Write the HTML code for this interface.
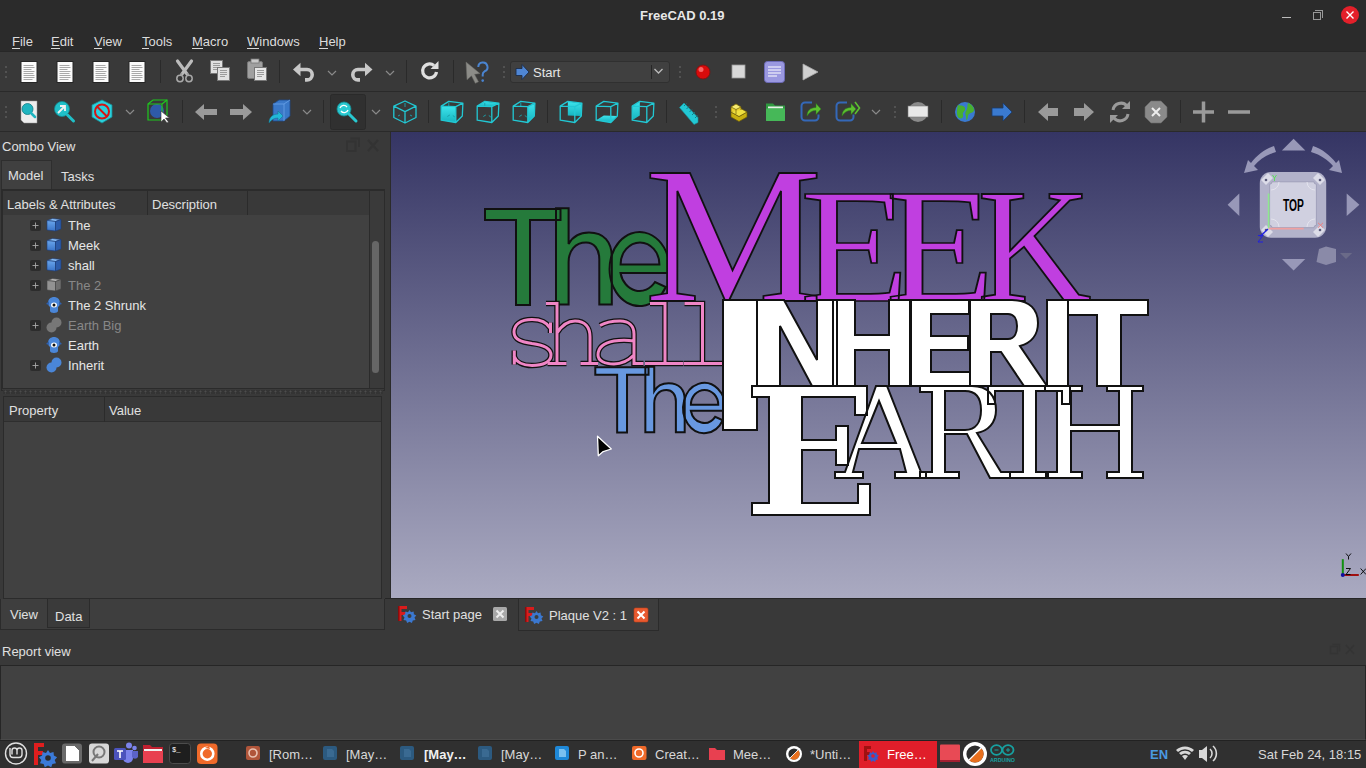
<!DOCTYPE html>
<html><head><meta charset="utf-8">
<style>
*{margin:0;padding:0;box-sizing:border-box}
html,body{width:1366px;height:768px;overflow:hidden;background:#393939;font-family:"Liberation Sans",sans-serif;font-size:13px;color:#dcdcdc}
.a{position:absolute}
.t{position:absolute;white-space:nowrap;line-height:1}
#title{left:0;top:0;width:1366px;height:52px;background:#2b2b2b}
#tb1{left:0;top:52px;width:1366px;height:40px;background:#393939;border-bottom:1px solid #2a2a2a}
#tb2{left:0;top:92px;width:1366px;height:40px;background:#393939;border-bottom:1px solid #2a2a2a}
.menu u{text-decoration:none;background:linear-gradient(#d8d8d8,#d8d8d8) no-repeat 0 13.8px/100% 1px}
#view3d{left:391px;top:132px;width:975px;height:466px;background:linear-gradient(#353564,#aaaac1)}
#taskbar{left:0;top:740px;width:1366px;height:28px;background:#303030}
.sep{position:absolute;width:1px;height:22px;background:#2a2a2a}
.hdl{position:absolute;width:2px;height:2px;background:#525252}
</style></head><body>
<div id="title" class="a"><div class="a" style="left:0;top:51px;width:1366px;height:1px;background:#272727"></div>
  <div class="t" style="left:640px;top:9px;font-weight:bold;color:#e8e8e8">FreeCAD 0.19</div>
  <div class="a" style="left:1282px;top:17px;width:9px;height:1px;background:#bbb"></div>
  <div class="a" style="left:1313px;top:12px;width:8px;height:8px;border:1px solid #999"></div>
  <div class="a" style="left:1315px;top:10px;width:8px;height:8px;border-top:1px solid #999;border-right:1px solid #999"></div>
  <div class="a" style="left:1341px;top:6px;width:18px;height:18px;border-radius:50%;background:#e3202a"></div>
  <svg class="a" style="left:1341px;top:6px" width="18" height="18"><path d="M5.5 5.5L12.5 12.5M12.5 5.5L5.5 12.5" stroke="#fff" stroke-width="1.4"/></svg>

  <div class="t menu" style="left:12px;top:35px"><u>F</u>ile</div>
  <div class="t menu" style="left:51px;top:35px"><u>E</u>dit</div>
  <div class="t menu" style="left:94px;top:35px"><u>V</u>iew</div>
  <div class="t menu" style="left:142px;top:35px"><u>T</u>ools</div>
  <div class="t menu" style="left:192px;top:35px"><u>M</u>acro</div>
  <div class="t menu" style="left:247px;top:35px"><u>W</u>indows</div>
  <div class="t menu" style="left:319px;top:35px"><u>H</u>elp</div>
</div>
<div id="tb1" class="a">
 <div class="hdl" style="left:5px;top:14px"></div><div class="hdl" style="left:5px;top:19px"></div><div class="hdl" style="left:5px;top:24px"></div>
 <svg class="a" style="left:0;top:0" width="1366" height="40">
  <defs>
   <g id="doc"><rect x="0.5" y="0.5" width="16" height="21" fill="#fbfbfb" stroke="#262626"/>
    <path d="M3 4.5h10M3 6.5h11M3 8.5h8M3 10.5h11M3 12.5h10M3 14.5h11M3 16.5h11M3 18.5h9" stroke="#a8a8a8" stroke-width="1"/></g>
   <path id="dd" d="M0 0l4 4l4-4" fill="none" stroke="#8a8a8a" stroke-width="1.2"/>
  </defs>
  <use href="#doc" x="20.5" y="9"/>
  <use href="#doc" x="56.5" y="9"/>
  <use href="#doc" x="92.5" y="9"/>
  <use href="#doc" x="128.5" y="9"/>
  <rect x="160" y="8" width="1" height="23" fill="#2a2a2a"/>
  <!-- scissors -->
  <path d="M177.5 9l9.5 13M191.5 9l-9.5 13" stroke="#bcbcbc" stroke-width="3.2" stroke-linecap="round"/>
  <path d="M182 21l-1.5 2M187 21l1.5 2" stroke="#a0a0a0" stroke-width="1.5"/>
  <circle cx="180" cy="26.5" r="3.2" fill="none" stroke="#a8a8a8" stroke-width="1.5"/><circle cx="189" cy="26.5" r="3.2" fill="none" stroke="#a8a8a8" stroke-width="1.5"/>
  <!-- copy -->
  <rect x="210.5" y="8.5" width="12" height="13" fill="#e0e0e0" stroke="#777"/>
  <path d="M213 11.5h7M213 13.5h7M213 15.5h7M213 17.5h5" stroke="#888" stroke-width="0.8"/>
  <rect x="217.5" y="15.5" width="12" height="13" fill="#e0e0e0" stroke="#777"/>
  <path d="M220 18.5h7M220 20.5h7M220 22.5h7M220 24.5h5" stroke="#888" stroke-width="0.8"/>
  <!-- paste -->
  <rect x="247.5" y="9.5" width="15" height="17" rx="1.5" fill="#a0a0a0" stroke="#777"/>
  <rect x="251" y="7" width="8" height="4" fill="#c8c8c8" stroke="#777" stroke-width="0.8"/>
  <rect x="254.5" y="15.5" width="12" height="13" fill="#e6e6e6" stroke="#777"/>
  <path d="M257 18.5h7M257 20.5h7M257 22.5h7M257 24.5h5" stroke="#888" stroke-width="0.8"/>
  <rect x="279" y="8" width="1" height="23" fill="#2a2a2a"/>
  <!-- undo -->
  <path d="M299 17.5h8a5.2 5.2 0 0 1 0 10.4h-2" fill="none" stroke="#c8c8c8" stroke-width="3.6"/>
  <path d="M293 17.5l7.5-6.8v13.6z" fill="#c8c8c8"/>
  <use href="#dd" x="328" y="19"/>
  <!-- redo -->
  <path d="M366 17.5h-8a5.2 5.2 0 0 0 0 10.4h2" fill="none" stroke="#c8c8c8" stroke-width="3.6"/>
  <path d="M372.5 17.5l-7.5-6.8v13.6z" fill="#c8c8c8"/>
  <use href="#dd" x="386" y="19"/>
  <rect x="406" y="8" width="1" height="23" fill="#2a2a2a"/>
  <!-- refresh -->
  <path d="M436.5 20a7 7 0 1 1-2.5-6.5" fill="none" stroke="#e0e0e0" stroke-width="3.2"/>
  <path d="M438.5 9v8h-8z" fill="#e0e0e0"/>
  <rect x="453" y="8" width="1" height="23" fill="#2a2a2a"/>
  <!-- whats this -->
  <path d="M466 10L480 21.5L474.5 22.3L478.5 29.8L475.3 31.3L471.5 23.8L467 27.8Z" fill="#8c8c88" stroke="#6c6c68" stroke-width="0.5"/>
  <path d="M478.3 15a4.6 4.6 0 1 1 6.3 4.3c-1.5 0.8-1.9 1.6-1.9 3.2v2" fill="none" stroke="#4a84d0" stroke-width="2"/>
  <circle cx="482.7" cy="28.6" r="1.3" fill="#4a84d0"/>
  <rect x="503" y="14" width="2" height="2" fill="#525252"/><rect x="503" y="19" width="2" height="2" fill="#525252"/><rect x="503" y="24" width="2" height="2" fill="#525252"/>
  <!-- combo -->
  <rect x="510.5" y="9.5" width="159" height="21" rx="2.5" fill="#404040" stroke="#303030"/>
  <rect x="651" y="13" width="1" height="14" fill="#262626"/>
  <path d="M654.5 17l4 4l4-4" fill="none" stroke="#bbb" stroke-width="1.3"/>
  <path d="M516 16.5h6v-4l7 7.5l-7 7.5v-4h-6z" fill="#4f86d4" stroke="#1c2c4a" stroke-width="0.9"/>
  <rect x="679" y="14" width="2" height="2" fill="#525252"/><rect x="679" y="19" width="2" height="2" fill="#525252"/><rect x="679" y="24" width="2" height="2" fill="#525252"/>
  <!-- record -->
  <circle cx="703" cy="20" r="7" fill="#d80b0b" stroke="#7a1010" stroke-width="0.8"/>
  <circle cx="701" cy="17.5" r="2.5" fill="#ff7a7a" opacity="0.8"/>
  <!-- stop -->
  <rect x="732" y="13" width="13" height="13" fill="#d8d8d8" stroke="#999" stroke-width="0.8"/>
  <!-- macro -->
  <rect x="764.5" y="9.5" width="20" height="21" rx="3" fill="#9a98e0" stroke="#6d6bb8"/>
  <path d="M768 15h13M768 18h13M768 21h13M768 24h9" stroke="#fff" stroke-width="1.2"/>
  <!-- play -->
  <path d="M803 12l15 8l-15 8z" fill="#d0d0d0" stroke="#a8a8a8" stroke-width="0.8"/>
 </svg>
 <span class="t" style="left:533px;top:14px;color:#e6e6e6">Start</span>
</div>
<div id="tb2" class="a">
 <div class="hdl" style="left:5px;top:14px"></div><div class="hdl" style="left:5px;top:19px"></div><div class="hdl" style="left:5px;top:24px"></div>
 <svg class="a" style="left:0;top:0" width="1366" height="40">
  <defs>
   <path id="dd2" d="M0 0l4 4l4-4" fill="none" stroke="#8a8a8a" stroke-width="1.2"/>
   <g id="cubeo"><path d="M1 6l5-5h15v15l-5 5h-15z" fill="none" stroke="#2ad3de" stroke-width="1.5"/><path d="M1 6h15v15M16 6l5-5" fill="none" stroke="#2ad3de" stroke-width="1.5"/></g>
  </defs>
  <!-- doc search -->
  <path d="M21 9h16v22h-13l-3-3z" fill="#ededed" stroke="#999" stroke-width="0.5"/>
  <circle cx="27.5" cy="17" r="5.5" fill="#1fb5c0" stroke="#127c85" stroke-width="0.8"/>
  <path d="M31 21l4 4" stroke="#1fb5c0" stroke-width="2.5" stroke-linecap="round"/>
  <!-- zoom arrow -->
  <circle cx="62" cy="17" r="7.5" fill="#20c0c8" stroke="#138a92" stroke-width="0.8"/>
  <path d="M67.5 23l6 6" stroke="#20c0c8" stroke-width="3" stroke-linecap="round"/>
  <path d="M58 21l7-7M60 14h5v5" fill="none" stroke="#f0f0f0" stroke-width="1.8"/>
  <!-- hexagon stop -->
  <path d="M102 8l10 5v12l-10 6l-10-6v-12z" fill="#2ad0dc" stroke="#178a92" stroke-width="0.8"/>
  <circle cx="102" cy="19.5" r="7" fill="none" stroke="#d41414" stroke-width="2"/>
  <path d="M97 14.5l10 10" stroke="#d41414" stroke-width="2"/>
  <use href="#dd2" x="126" y="18"/>
  <!-- cube select -->
  <path d="M148 12l5-4h14v15l-5 5h-14z" fill="none" stroke="#1ec81e" stroke-width="1.2"/>
  <circle cx="157" cy="19" r="7" fill="#2e5aa8"/>
  <path d="M148 12h14v16M162 12l5-4" fill="none" stroke="#1ec81e" stroke-width="1.2"/>
  <path d="M161 19l0 11l3-3l3 4l1.5-1l-3-4h4z" fill="#fff" stroke="#333" stroke-width="0.6"/>
  <rect x="182" y="8" width="1" height="23" fill="#2a2a2a"/>
  <!-- gray arrows -->
  <path d="M195 20l9-8v5h13v6h-13v5z" fill="#9a9a9a"/>
  <path d="M252 20l-9-8v5h-13v6h13v5z" fill="#9a9a9a"/>
  <!-- blue cube arrow -->
  <path d="M273 12l6-4h11v16l-6 5h-11z" fill="#3a78c8" stroke="#1e4a8a" stroke-width="0.8"/>
  <path d="M273 12h11v17M284 12l6-4" fill="none" stroke="#6aa2e8" stroke-width="0.8"/>
  <path d="M269 31c0-6 4-9 9-9v-3l5 5l-5 5v-3c-4 0-7 2-9 5z" fill="#22b8d8" stroke="#12708a" stroke-width="0.5"/>
  <use href="#dd2" x="303" y="18"/>
  <rect x="323" y="8" width="1" height="23" fill="#2a2a2a"/>
  <!-- pressed box -->
  <rect x="330.5" y="2.5" width="35" height="35" rx="2" fill="#303030" stroke="#2a2a2a"/>
  <circle cx="344" cy="17" r="7" fill="#28c8d0" stroke="#168a92" stroke-width="0.8"/>
  <path d="M349 22l7 7" stroke="#28c8d0" stroke-width="3" stroke-linecap="round"/>
  <path d="M340 16a4 4 0 0 1 7-1M348 18a4 4 0 0 1-7 1" fill="none" stroke="#fff" stroke-width="1.3"/>
  <use href="#dd2" x="372" y="18"/>
  <!-- iso cube -->
  <defs><path id="cbo" d="M0.2 5.1L7.8 0.4L21.9 2.2L14.8 5.7ZM0.2 5.1L0.2 19.2L14.8 21.5L14.8 5.7M21.9 2.2L21.3 15.0L14.8 21.5" fill="none" stroke="#22c8d4" stroke-width="1.3" stroke-linejoin="round"/><path id="cbh" d="M7.8 1.9V5.4M8.8 14.0l-2.5 1.5M11.8 14.5l2 1.5" fill="none" stroke="#1aa0aa" stroke-width="1"/><linearGradient id="cyg" x1="0" y1="0" x2="0" y2="1"><stop offset="0" stop-color="#3ee4ec"/><stop offset="1" stop-color="#16b4c0"/></linearGradient></defs>
  <path d="M405 9L416 14.2V25.5L405 31L393.8 25.5V14.2Z M393.8 14.2L405 19.6L416 14.2M405 19.6V31" fill="none" stroke="#22c8d4" stroke-width="1.3" stroke-linejoin="round"/>
  <path d="M405 11v4M398 24l2-1M410 23l2 1" stroke="#1aa0aa" stroke-width="1"/>
  <rect x="428" y="8" width="1" height="23" fill="#2a2a2a"/>
  <g transform="translate(441 9)"><path d="M0.2 5.1L14.8 5.7L14.8 21.5L0.2 19.2Z" fill="url(#cyg)"/><use href="#cbh"/><use href="#cbo"/></g>
  <g transform="translate(477 9)"><path d="M0.2 5.1L7.8 0.4L21.9 2.2L14.8 5.7Z" fill="url(#cyg)"/><use href="#cbh"/><use href="#cbo"/></g>
  <g transform="translate(513 9)"><path d="M14.8 5.7L21.9 2.2L21.3 15.0L14.8 21.5Z" fill="url(#cyg)"/><use href="#cbh"/><use href="#cbo"/></g>
  <rect x="547" y="8" width="1" height="23" fill="#2a2a2a"/>
  <g transform="translate(560 9)"><path d="M7.8 0.4L21.9 2.2L21.3 15.0L7.8 14.5Z" fill="url(#cyg)"/><use href="#cbo"/></g>
  <g transform="translate(596 9)"><path d="M0.2 19.2L14.8 21.5L21.3 15.0L7.8 14.5Z" fill="url(#cyg)"/><use href="#cbo"/></g>
  <g transform="translate(632 9)"><path d="M0.2 5.1L7.8 0.4L7.8 14.5L0.2 19.2Z" fill="url(#cyg)"/><use href="#cbo"/></g>
  <rect x="666" y="8" width="1" height="23" fill="#2a2a2a"/>
  <!-- ruler -->
  <path d="M679.5 15.5l4.5-4.5l14 14.5v5l-4 2z" fill="#22c8d4" stroke="#17949c" stroke-width="0.6"/>
  <path d="M684 14l2.5-2.5M686.5 17l3-3M689.5 20l2.5-2.5M692 23l3-3M695 26l2.5-2.5" stroke="#127880" stroke-width="0.9"/>
  <rect x="715" y="14" width="2" height="2" fill="#525252"/><rect x="715" y="19" width="2" height="2" fill="#525252"/><rect x="715" y="24" width="2" height="2" fill="#525252"/>
  <!-- yellow part -->
  <g stroke="#6a5a08" stroke-width="0.7" stroke-linejoin="round">
   <path d="M731 25l8 4.5l8-4.5v-5l-8 4.5l-8-4.5z" fill="#c8b010"/>
   <path d="M731 20l8 4.5l8-4.5l-8-4.5z" fill="#f0e040"/>
   <path d="M731 20v-5l5-3l5 3v3" fill="#e8d030"/>
   <path d="M731 15l5 2.5l5-2.5l-5-3z" fill="#f8ec70"/>
   <path d="M736 17.5v4.5" fill="none"/>
  </g>
  <!-- green folder -->
  <path d="M766 11.5h7l2 2h10v15.5h-19z" fill="#2f9a40"/>
  <rect x="768" y="14.5" width="15" height="2" fill="#e8f0e8"/>
  <rect x="766" y="16.5" width="19" height="12.5" rx="0.8" fill="#46b858"/>
  <!-- share -->
  <path d="M812 10.5H805a3.5 3.5 0 0 0-3.5 3.5V25a3.5 3.5 0 0 0 3.5 3.5H815a3.5 3.5 0 0 0 3.5-3.5V22.5" fill="none" stroke="#3468b8" stroke-width="2"/>
  <path d="M807 24c0-5 3-8.5 9-8.5v-4l5 5.5l-5 5.5v-4c-4 0-7 2-9 5.5z" fill="#5cc030" stroke="#2a7a1a" stroke-width="0.5"/>
  <path d="M847 10.5H840a3.5 3.5 0 0 0-3.5 3.5V25a3.5 3.5 0 0 0 3.5 3.5H850a3.5 3.5 0 0 0 3.5-3.5V22.5" fill="none" stroke="#3468b8" stroke-width="2"/>
  <path d="M842 24c0-5 3-8.5 9-8.5v-4l5 5.5l-5 5.5v-4c-4 0-7 2-9 5.5z" fill="#5cc030" stroke="#2a7a1a" stroke-width="0.5"/>
  <path d="M855 10l4.5 6l-4.5 6" fill="none" stroke="#5cc030" stroke-width="1.6"/>
  <use href="#dd2" x="872" y="18"/>
  <rect x="894" y="14" width="2" height="2" fill="#525252"/><rect x="894" y="19" width="2" height="2" fill="#525252"/><rect x="894" y="24" width="2" height="2" fill="#525252"/>
  <!-- gray window -->
  <circle cx="918" cy="20" r="10" fill="#8a8a8a"/>
  <rect x="908" y="14" width="20" height="11" fill="#e8e8e8" stroke="#777" stroke-width="0.6"/>
  <rect x="941" y="8" width="1" height="23" fill="#2a2a2a"/>
  <!-- globe -->
  <circle cx="965" cy="20" r="10" fill="#3a7ad0"/>
  <path d="M958 13c3 1 6 0 7 3s-3 4-2 7s-2 4-4 3s-3-6-1-13zM968 11c3 1 6 4 6 7s-3 2-5 4s0 5-3 6c1-4-2-6 0-9s1-5 2-8z" fill="#48b030"/>
  <!-- blue arrow -->
  <path d="M992 16h11v-5l9 9l-9 9v-5h-11z" fill="#3a7ad0" stroke="#1a3a6a" stroke-width="0.8"/>
  <rect x="1024" y="8" width="1" height="23" fill="#2a2a2a"/>
  <path d="M1038 20l10-9v5h10v8h-10v5z" fill="#9a9a9a"/>
  <path d="M1094 20l-10-9v5h-10v8h10v5z" fill="#9a9a9a"/>
  <!-- refresh gray -->
  <path d="M1113 18a8 8 0 0 1 14-4M1128 22a8 8 0 0 1-14 4" fill="none" stroke="#9a9a9a" stroke-width="3"/>
  <path d="M1130 9v8h-8zM1110 31v-8h8z" fill="#9a9a9a"/>
  <!-- stop octagon -->
  <path d="M1151 9h10l6 6v10l-6 6h-10l-6-6v-10z" fill="#8a8a8a" stroke="#6a6a6a" stroke-width="0.6"/>
  <path d="M1152 16l8 8M1160 16l-8 8" stroke="#eee" stroke-width="2"/>
  <rect x="1180" y="8" width="1" height="23" fill="#2a2a2a"/>
  <path d="M1193 20h21M1203.5 9.5v21" stroke="#9a9a9a" stroke-width="3.5"/>
  <path d="M1228 20h22" stroke="#9a9a9a" stroke-width="3.5"/>
 </svg>
</div>
<div id="combo" class="a" style="left:0;top:132px;width:391px;height:508px;background:#393939">
 <div class="t" style="left:2px;top:8px;color:#e0e0e0">Combo View</div>
 <svg class="a" style="left:340px;top:1px" width="45" height="22"><path d="M7 8.5h8.5v9.5h-8.5zM10.5 5.5h8.5v8.5" fill="none" stroke="#333" stroke-width="2"/><path d="M28 7l10 11M38 7l-10 11" stroke="#333" stroke-width="2.2"/></svg>
 <!-- tabs -->
 <div class="a" style="left:1px;top:28px;width:51px;height:30px;background:#404040;border:1px solid #2e2e2e;border-bottom:none"></div>
 <div class="t" style="left:8px;top:37px;color:#e0e0e0">Model</div>
 <div class="t" style="left:61px;top:38px;color:#e0e0e0">Tasks</div>
 <!-- pane -->
 <div class="a" style="left:1px;top:57px;width:384px;height:202px;border:1px solid #2b2b2b;background:#3a3a3a"></div>
 <!-- tree -->
 <div class="a" style="left:2px;top:58px;width:382px;height:199px;border:1px solid #2b2b2b;background:#414141"></div>
 <div class="a" style="left:3px;top:59px;width:366px;height:24px;background:#393939"></div>
 <div class="a" style="left:147px;top:59px;width:1px;height:24px;background:#2b2b2b"></div>
 <div class="a" style="left:247px;top:59px;width:1px;height:24px;background:#2b2b2b"></div>
 <div class="t" style="left:7px;top:66px;color:#e0e0e0">Labels &amp; Attributes</div>
 <div class="t" style="left:152px;top:66px;color:#e0e0e0">Description</div>
 <div class="a" style="left:369px;top:59px;width:15px;height:197px;background:#3a3a3a;border-left:1px solid #2b2b2b"></div>
 <div class="a" style="left:372px;top:109px;width:7px;height:132px;border-radius:4px;background:#666"></div>
 <!-- splitter -->
 <div class="a" style="left:3px;top:258px;width:380px;height:4px;background:radial-gradient(circle,#4c4c4c 0.9px,transparent 1.1px) 0 0/5px 3px,#343434"></div>
 <!-- property -->
 <div class="a" style="left:3px;top:264px;width:379px;height:203px;border:1px solid #2b2b2b;background:#414141"></div>
 <div class="a" style="left:4px;top:265px;width:377px;height:25px;background:#393939;border-bottom:1px solid #2e2e2e"></div>
 <div class="a" style="left:104px;top:265px;width:1px;height:25px;background:#2b2b2b"></div>
 <div class="t" style="left:9px;top:272px;color:#e0e0e0">Property</div>
 <div class="t" style="left:109px;top:272px;color:#e0e0e0">Value</div>
 <!-- bottom tabs -->
 <div class="a" style="left:0;top:467px;width:385px;height:31px;background:#3e3e3e;border-right:1px solid #2b2b2b;border-bottom:1px solid #2b2b2b;border-left:1px solid #2b2b2b"></div>
 <div class="a" style="left:47px;top:467px;width:43px;height:29px;background:#3a3a3a;border:1px solid #2b2b2b;border-top:none"></div>
 <div class="t" style="left:10px;top:476px;color:#e0e0e0">View</div>
 <div class="t" style="left:55px;top:478px;color:#e0e0e0">Data</div>
 <div class="a" style="left:390px;top:0;width:1px;height:466px;background:#2b2b2b"></div>
</div>
<svg class="a" style="left:0;top:212px" width="370" height="165">
 <defs>
  <g id="pl"><rect x="0" y="0" width="11" height="11" rx="2" fill="#2c2c2c"/><path d="M2.5 5.5h6M5.5 2.5v6" stroke="#a8a8a8" stroke-width="0.9"/></g>
  <linearGradient id="cbg" x1="0" y1="0" x2="0" y2="1"><stop offset="0" stop-color="#6aa6ec"/><stop offset="1" stop-color="#3a74c8"/></linearGradient>
  <g id="cb" stroke="#1c3c78" stroke-width="0.6" stroke-linejoin="round"><path d="M1 3.5L6.5 1.5L15 2.5L9.5 4.5Z" fill="#86baf2"/><path d="M1 3.5L9.5 4.5V14L1 13Z" fill="url(#cbg)"/><path d="M9.5 4.5L15 2.5V12L9.5 14Z" fill="#2c5caa"/></g>
  <g id="cg" stroke="#444" stroke-width="0.6" stroke-linejoin="round"><path d="M1 3.5L6.5 1.5L15 2.5L9.5 4.5Z" fill="#b4b4b4"/><path d="M1 3.5L9.5 4.5V14L1 13Z" fill="#929292"/><path d="M9.5 4.5L15 2.5V12L9.5 14Z" fill="#6e6e6e"/></g>
  <g id="sh"><path d="M2 6c0-4 3-6 6-6s6 2 6 6c0 2-1 3-2 4v4c0 1-2 2-4 2s-4-1-4-2v-4c-1-1-2-2-2-4z" fill="#4a86d8"/><path d="M0 7l3-3v4zM16 7l-3-3v4z" fill="#2f62b0"/><ellipse cx="8" cy="8" rx="3" ry="2.5" fill="#fff"/><circle cx="8" cy="8" r="1.5" fill="#111"/></g>
  <g id="bl"><circle cx="5.5" cy="10.5" r="5" fill="currentColor"/><circle cx="10.5" cy="5.5" r="5" fill="currentColor"/></g>
 </defs>
 <use href="#pl" x="30" y="8"/><use href="#cb" x="46" y="5"/>
 <use href="#pl" x="30" y="28"/><use href="#cb" x="46" y="25"/>
 <use href="#pl" x="30" y="48"/><use href="#cb" x="46" y="45"/>
 <use href="#pl" x="30" y="68"/><use href="#cg" x="46" y="65"/>
 <use href="#sh" x="46" y="85"/>
 <use href="#pl" x="30" y="108"/><use href="#bl" x="46" y="105" style="color:#777"/>
 <use href="#sh" x="46" y="125"/>
 <use href="#pl" x="30" y="148"/><use href="#bl" x="46" y="145" style="color:#4a86d8"/>
</svg>
<div class="t" style="left:68px;top:219px;color:#e6e6e6">The</div>
<div class="t" style="left:68px;top:239px;color:#e6e6e6">Meek</div>
<div class="t" style="left:68px;top:259px;color:#e6e6e6">shall</div>
<div class="t" style="left:68px;top:279px;color:#888">The 2</div>
<div class="t" style="left:68px;top:299px;color:#e6e6e6">The 2 Shrunk</div>
<div class="t" style="left:68px;top:319px;color:#888">Earth Big</div>
<div class="t" style="left:68px;top:339px;color:#e6e6e6">Earth</div>
<div class="t" style="left:68px;top:359px;color:#e6e6e6">Inherit</div>
<div id="view3d" class="a">
<svg class="a" style="left:0;top:0" width="975" height="466">
<g transform="translate(-391,-132)" stroke-linejoin="miter">
 <defs>
  <g id="g_theg" fill-rule="evenodd">
   <path d="M485 209H560.5V220H530V305H516V220H485Z"/>
   <path d="M556 208.3H568.6V244C573 236 580 232.5 589 232.5C604 232.5 611.8 242 611.8 257V304.5H599.3V259C599.3 249 594 242.5 586 242.5C575 242.5 568.6 251 568.6 262V304.5H556Z"/>
   <path d="M669.4 273A30 37 0 1 0 665.8 287L655 282A19.5 23 0 0 1 620.5 273Z M620.6 264.4A19.4 22 0 0 1 659.4 264.4Z"/>
  </g>
  <g id="g_theb" fill-rule="evenodd" transform="translate(595.3 367.2) scale(0.705 0.68) translate(-485 -209)">
   <path vector-effect="non-scaling-stroke" d="M485 209H560.5V220H530V305H516V220H485Z"/>
   <path vector-effect="non-scaling-stroke" d="M556 208.3H568.6V244C573 236 580 232.5 589 232.5C604 232.5 611.8 242 611.8 257V304.5H599.3V259C599.3 249 594 242.5 586 242.5C575 242.5 568.6 251 568.6 262V304.5H556Z"/>
   <path vector-effect="non-scaling-stroke" d="M669.4 273A30 37 0 1 0 665.8 287L655 282A19.5 23 0 0 1 620.5 273Z M620.6 264.4A19.4 22 0 0 1 659.4 264.4Z"/>
  </g>
  <g id="g_meek" font-family="Liberation Serif" font-size="100">
   <text transform="translate(644.5 301) scale(2.001 1.96)" vector-effect="non-scaling-stroke">M</text>
   <text transform="translate(800 301) scale(1.787 1.64)" vector-effect="non-scaling-stroke">E</text>
   <text transform="translate(885.6 301) scale(1.787 1.64)" vector-effect="non-scaling-stroke">E</text>
   <text transform="translate(977.3 301) scale(1.583 1.64)" vector-effect="non-scaling-stroke">K</text>
  </g>
  <g id="g_inh" fill-rule="evenodd">
   <path d="M723 300H757V430H723Z"/>
   <path d="M757 300H784L817 360V300H837V386H812L780 326V386H757Z"/>
   <path d="M833 300H855V335H889V300H910V386H889V350H855V386H833Z"/>
   <path d="M911 300H969V314H931V336H968V350H931V372H970V386H911Z"/>
   <path d="M970 300H1012C1030 300 1038 310 1038 323C1038 335 1031 343 1020 346L1047 386H1024L1001 352H991V386H970Z M991 314V339H1008C1015 339 1017 332 1017 326C1017 319 1014 314 1008 314Z"/>
   <path d="M1047 300H1068V386H1047Z"/>
   <path d="M1068 300H1148V315H1121V386H1097V315H1068Z"/>
  </g>
  <g id="g_earth" fill-rule="evenodd">
   <path d="M752 386H867V415H855V397H802V440H836V426H848V465H836V450H802V503H858V484H870V515H752V503H769V397H752Z"/>
   <path d="M876 386H887L921 472H926V478H895V472H906L900 449H859L853 472H863V478H835V472H845Z M862 443H896L879 401Z"/>
   <path d="M920 386H972C988 386 996 396 996 410C996 423 988 431 977 433L1001 472H1010V478H990L967 434H945V472H959V478H920V472H932V392H920Z M945 391V430H965C976 430 981 422 981 410C981 398 976 391 965 391Z"/>
   <path d="M988 386H1070V404H1062V391H1036V472H1046V478H1010V472H1023V391H995V404H988Z"/>
   <path d="M1045 386H1082V391H1071V425H1119V391H1107V386H1143V391H1132V472H1143V478H1107V472H1119V431H1071V472H1082V478H1048V472H1057V391H1045Z"/>
  </g>
  <g id="shallp">
   <path d="M550.5 322.5V333M550 328C546 321 538 319.5 532 319.5C520 319.5 514 325 514 332C514 340 522 342 532 343.5C544 345 551 348 551 355C551 362 543 365.5 532 365.5C523 365.5 516 362 514 356M514.3 350.5V364.5"/>
   <path d="M546 303.5H557V363.5M547.5 363.5H566.5M557 333C562 325 568 321 575 321C585 321 590 327 590 337V363.5M580.5 363.5H598"/>
   <path d="M600 325.5C606 322 613 321 620 321C629 321 634 326 634 334V363.5H643.5M634 341C628 340 620 340 614 341C603 343 598 348 598 355C598 361 605 364 614 364C622 364 629 360 634 355"/>
   <path d="M650 303.5H665V363.5M645 363.5H683.5"/>
   <path d="M684.5 303.5H702.5V363.5M684 363.5H724"/>
  </g>
 </defs>
 <!-- words: fill then outline -->
 <use href="#g_theg" fill="#257a3b" stroke="none"/>
 <use href="#g_theg" fill="none" stroke="#111" stroke-width="2"/>
 <use href="#g_meek" fill="#c03fe0" stroke="none"/>
 <use href="#g_meek" fill="none" stroke="#111" stroke-width="1.8"/>
 <use href="#shallp" stroke="#111" stroke-width="5.5" fill="none"/>
 <use href="#shallp" stroke="#ef86c6" stroke-width="3" fill="none"/>
 <use href="#g_theb" fill="#6898e0" stroke="none"/>
 <use href="#g_theb" fill="none" stroke="#111" stroke-width="2"/>
 <use href="#g_inh" fill="#fff" stroke="none"/>
 <use href="#g_inh" fill="none" stroke="#111" stroke-width="2"/>
 <use href="#g_earth" fill="#fff" stroke="none"/>
 <use href="#g_earth" fill="none" stroke="#111" stroke-width="2"/>
 <!-- cursor -->
 <path d="M597.5 436.2L611.3 449L603.2 451.6L598.3 455.7Z" fill="#000" stroke="#fff" stroke-width="1.3" stroke-linejoin="round"/>
 <!-- nav cube -->
 <g fill="#9898b8">
  <path d="M1293.6 138.8L1305.3 150.5H1281.9Z"/>
  <path d="M1293.6 270.6L1305.3 259H1281.9Z"/>
  <path d="M1227.6 204.8L1239.3 193.5V216Z"/>
  <path d="M1359.4 204.8L1346.7 193.5V216Z"/>
  <path d="M1274 146L1276 152C1266 155 1259 160 1254 166L1258 170L1244 173L1248 160L1251 163C1257 155 1265 149 1274 146Z"/>
  <path d="M1313 146L1311 152C1321 155 1328 160 1333 166L1329 170L1342 173L1339 160L1336 163C1330 155 1322 149 1313 146Z"/>
  <path d="M1319 249L1326 246.5L1336 249V262L1326 265L1316.5 262Z" fill="#8a8aa8"/>
  <path d="M1340 253H1352.2L1346 259Z" fill="#6a6a88"/>
 </g>
 <rect x="1259.8" y="172" width="66.4" height="65.8" rx="11" fill="#b2b2ca"/>
 <path d="M1272 181.8H1314A2.4 2.4 0 0 0 1316.4 184.2V225.3A2.4 2.4 0 0 0 1314 227.7H1272A2.4 2.4 0 0 0 1269.6 225.3V184.2A2.4 2.4 0 0 0 1272 181.8Z" fill="#d0d0e0" stroke="#a0a0ba" stroke-width="1"/>
 <path d="M1271 190a8 8 0 0 0 8-8M1315 190a8 8 0 0 1-8-8M1271 219a8 8 0 0 1 8 8M1315 219a8 8 0 0 0-8 8" fill="none" stroke="#e4e4ee" stroke-width="1"/>
 <g fill="#dcdce8"><path d="M1261 180l7-7l5 5l-7 7z"/><path d="M1325 180l-7-7l-5 5l7 7z"/><path d="M1261 230l7 7l5-5l-7-7z"/><path d="M1325 230l-7 7l-5-5l7-7z"/></g>
 <g fill="#5a5a7a"><circle cx="1266" cy="180" r="1.3"/><circle cx="1320" cy="180" r="1.3"/><circle cx="1266" cy="230" r="1.3"/><circle cx="1320" cy="230" r="1.3"/></g>
 <text x="0" y="0" font-family="Liberation Sans" font-weight="bold" font-size="16" fill="#000" transform="translate(1283 211) scale(0.64 1)">TOP</text>
 <path d="M1268.6 193.5V228.6" stroke="#8fe88f" stroke-width="1.6"/>
 <path d="M1268.6 228.6H1303.7" stroke="#f0a0a0" stroke-width="1.6"/>
 <path d="M1268 229L1260 236.4" stroke="#2020e0" stroke-width="1.4"/>
 <path d="M1258 235.5H1263L1258 242H1263" fill="none" stroke="#2020e0" stroke-width="1"/>
 <path d="M1272.5 175L1274.5 178L1276.5 175M1274.5 178V181" fill="none" stroke="#60e060" stroke-width="1"/>
 <path d="M1318 222.8L1323 227.7M1323 222.8L1318 227.7" fill="none" stroke="#f08080" stroke-width="1"/>
 <!-- axis cross -->
 <path d="M1342.8 559.2V575" stroke="#109010" stroke-width="2"/>
 <path d="M1342.8 575H1358.8" stroke="#a01010" stroke-width="2"/>
 <circle cx="1342.8" cy="575" r="2" fill="#1010a0"/>
 <path d="M1346 553.5L1348.5 556.5L1351 553.5M1348.5 556.5V559.5M1346 568.5H1350.5L1346 574.5H1350.5M1360.6 568.5L1366 574.5M1366 568.5L1360.6 574.5" fill="none" stroke="#000" stroke-width="0.9"/>
</g>
</svg>
</div>
<!-- doc tabs -->
<div class="a" style="left:385px;top:598px;width:981px;height:1px;background:#262626"></div>
<div class="a" style="left:518px;top:599px;width:141px;height:32px;background:#3d3d3d;border:1px solid #2b2b2b;border-top:none"></div>
<svg class="a" style="left:0;top:0;overflow:visible" width="1" height="1">
 <defs>
  <g id="fc"><path d="M0 0h9v3h-5.5v3h4.5v3h-4.5v6h-3.5z" fill="#d91c1c"/><path d="M0 0h1.5v15h-1.5z" fill="#8a0c0c"/>
   <g transform="translate(11.5 10)"><path d="M0-6l1.5 2.2l2.6-.7l.3 2.7l2.4 1.3l-1.8 2l1 2.5l-2.7.4l-.9 2.6l-2.4-1.3l-2.4 1.3l-.9-2.6l-2.7-.4l1-2.5l-1.8-2l2.4-1.3l.3-2.7l2.6.7z" fill="#3b78d0"/><circle r="2" fill="#3d3d3d"/></g></g>
 </defs>
 <use href="#fc" x="398" y="606"/>
 <use href="#fc" x="525" y="607"/>
 <rect x="493" y="607" width="14" height="14" rx="1.5" fill="#a8a8a8"/>
 <path d="M496.5 610.5l7 7M503.5 610.5l-7 7" stroke="#eee" stroke-width="2"/>
 <rect x="634" y="608" width="14" height="14" rx="1.5" fill="#e85a30" stroke="#c8401a" stroke-width="0.6"/>
 <path d="M637.5 611.5l7 7M644.5 611.5l-7 7" stroke="#fff" stroke-width="2"/>
</svg>
<div class="t" style="left:422px;top:608px;color:#e0e0e0">Start page</div>
<div class="t" style="left:549px;top:609px;color:#e0e0e0">Plaque V2 : 1</div>
<!-- report view -->
<div class="a" style="left:0;top:640px;width:1366px;height:100px;background:#393939"></div>
<div class="t" style="left:2px;top:645px;color:#e0e0e0">Report view</div>
<svg class="a" style="left:1326px;top:642px" width="40" height="16"><path d="M4.5 4.5h7v7h-7zM6.5 2.5h7v7" fill="none" stroke="#343434" stroke-width="1.4"/><path d="M20 3l8 9M28 3l-8 9" stroke="#343434" stroke-width="1.6"/></svg>
<div class="a" style="left:0;top:665px;width:1366px;height:75px;background:#414141;border:1px solid #262626;border-bottom-color:#4a4a4a"></div>
<div id="taskbar" class="a">
 <div class="a" style="left:0;top:0;width:1366px;height:1px;background:#222"></div>
 <svg class="a" style="left:0;top:0" width="1366" height="28">
  <!-- mint -->
  <circle cx="16" cy="13.5" r="10.5" fill="none" stroke="#e0e0e0" stroke-width="1.4"/>
  <path d="M10 8v6.5a3 3 0 0 0 3 3h6a3 3 0 0 0 3-3v-4a2.5 2.5 0 0 0-5 0v4M17 10.5a2.5 2.5 0 0 0-5 0v4" fill="none" stroke="#e0e0e0" stroke-width="1.4"/>
  <!-- freecad -->
  <path d="M34 3h10v4h-6v4h5v4h-5v10h-4z" fill="#e01e1e"/>
  <g transform="translate(48 18)"><path d="M0-8l2 3l3.5-1l.4 3.6l3.2 1.7l-2.4 2.7l1.3 3.3l-3.6.6l-1.2 3.4l-3.2-1.7l-3.2 1.7l-1.2-3.4l-3.6-.6l1.3-3.3l-2.4-2.7l3.2-1.7l.4-3.6l3.5 1z" fill="#3b7ad8"/><circle r="2.8" fill="#2b2b2b"/></g>
  <!-- doc -->
  <rect x="62" y="3.5" width="20" height="20" rx="3" fill="#6a6a6a"/>
  <path d="M66 6h9l4 4v11h-13z" fill="#fff"/><path d="M75 6l4 4" stroke="#6a6a6a" stroke-width="1"/>
  <!-- hdd -->
  <rect x="89" y="3.5" width="20" height="20" rx="3" fill="#d8d8d8"/>
  <circle cx="99" cy="12" r="5.5" fill="none" stroke="#777" stroke-width="2"/><path d="M92 21l6-7" stroke="#777" stroke-width="2"/>
  <!-- teams -->
  <circle cx="129" cy="5.5" r="3" fill="#7b83eb"/><circle cx="134.5" cy="8" r="2.3" fill="#7b83eb"/>
  <path d="M123 10h10v8a5 5 0 0 1-10 0z" fill="#7b83eb"/><path d="M132 11h6v6a3.5 3.5 0 0 1-6 0z" fill="#5b63c8"/>
  <rect x="114" y="8" width="12" height="12" rx="1.5" fill="#4b53bc"/><path d="M117 11h6M120 11v7" stroke="#fff" stroke-width="1.6"/>
  <!-- folder -->
  <path d="M143 5h7l2 2h11v16h-20z" fill="#c02030"/><rect x="144" y="9" width="18" height="2" fill="#f0f0f0"/><path d="M143 11h20v12h-20z" fill="#e84050"/>
  <!-- terminal -->
  <rect x="169.5" y="3.5" width="21" height="20" rx="3" fill="#1e1e1e" stroke="#555" stroke-width="0.8"/>
  <text x="172" y="12" font-family="Liberation Mono" font-size="7" fill="#fff">$_</text>
  <!-- firefox -->
  <rect x="197" y="3.5" width="20.5" height="20.5" rx="4" fill="#f06a2a"/>
  <circle cx="207.3" cy="13.7" r="6" fill="none" stroke="#fff" stroke-width="2.6"/><path d="M205 8l4-2l1 3z" fill="#f06a2a"/>
  <!-- window list icons -->
  <rect x="246" y="6" width="14" height="14" rx="2" fill="#b0553a"/><circle cx="253" cy="13" r="4" fill="none" stroke="#e8c0b0" stroke-width="1.6"/>
  <rect x="323" y="6" width="14" height="14" rx="2" fill="#2c5a80"/><path d="M327 9h5l2 2v6h-7z" fill="#3a6a92"/>
  <rect x="400" y="6" width="14" height="14" rx="2" fill="#2c5a80"/><path d="M404 9h5l2 2v6h-7z" fill="#3a6a92"/>
  <rect x="478" y="6" width="14" height="14" rx="2" fill="#2c5a80"/><path d="M482 9h5l2 2v6h-7z" fill="#3a6a92"/>
  <rect x="555" y="6" width="14" height="14" rx="2" fill="#1e88d8"/><path d="M559 9h5l2 2v6h-7z" fill="#7ac0f0"/>
  <rect x="632" y="6" width="14.5" height="14" rx="2" fill="#f06a2a"/><circle cx="639" cy="13" r="4" fill="none" stroke="#fff" stroke-width="1.6"/>
  <path d="M709 8h6l2 2h8v10h-16z" fill="#e84050"/>
  <circle cx="794" cy="14" r="8" fill="#fff"/><circle cx="794" cy="14" r="5.6" fill="#2e2e2e"/><path d="M798 10A5.6 5.6 0 0 1 790 18Z" fill="#e8701e"/><path d="M798.2 9.8L789.8 18.2" stroke="#fff" stroke-width="0.9"/>
  <rect x="859" y="1" width="78" height="27" fill="#e01e2a"/>
  <path d="M864 6h7v3h-4v3h3v3h-3v6h-3z" fill="#a01010"/>
  <g transform="translate(873 16)"><path d="M0-5l1.3 1.9l2.2-.6l.3 2.2l2 1.1l-1.5 1.7l.8 2.1l-2.2.4l-.8 2.1l-2-1.1l-2 1.1l-.8-2.1l-2.2-.4l.8-2.1l-1.5-1.7l2-1.1l.3-2.2l2.2.6z" fill="#3b5ac8"/><circle r="1.8" fill="#e01e2a"/></g>
  <rect x="940" y="4.5" width="20" height="17" rx="1" fill="#e84a55"/><rect x="940" y="20" width="20" height="2" fill="#a02030"/>
  <circle cx="975" cy="14" r="12" fill="#fff"/><circle cx="975" cy="14" r="8.6" fill="#2e2e2e"/><path d="M981.1 7.9A8.6 8.6 0 0 1 968.9 20.1Z" fill="#e8701e"/><path d="M981.5 7.5L968.5 20.5" stroke="#fff" stroke-width="1.2"/>
  <ellipse cx="996.5" cy="10" rx="5.5" ry="4.8" fill="none" stroke="#17a0a0" stroke-width="1.8"/>
  <ellipse cx="1008" cy="10" rx="5.5" ry="4.8" fill="none" stroke="#17a0a0" stroke-width="1.8"/>
  <path d="M994.5 10h4M1006 10h4M1008 8v4" stroke="#17a0a0" stroke-width="1"/>
  <text x="990" y="22" font-family="Liberation Sans" font-size="5" font-weight="bold" fill="#17a0a0" textLength="25" lengthAdjust="spacingAndGlyphs">ARDUINO</text>
  <!-- tray -->
  <path d="M1176 10a13 13 0 0 1 18 0l-2 2a10 10 0 0 0-14 0zM1179 13a9 9 0 0 1 12 0l-2 2a6 6 0 0 0-8 0zM1182 16a5 5 0 0 1 6 0l-3 4z" fill="#d8d8d8"/>
  <path d="M1199 10h3l5-4v16l-5-4h-3z" fill="#d8d8d8"/>
  <path d="M1210 9a6 6 0 0 1 0 9M1213 6a10 10 0 0 1 0 15" fill="none" stroke="#d8d8d8" stroke-width="1.6"/>
 </svg>
 <div class="t" style="left:269px;top:8px;color:#d8d8d8">[Rom…</div>
 <div class="t" style="left:346px;top:8px;color:#d8d8d8">[May…</div>
 <div class="t" style="left:424px;top:8px;color:#f0f0f0;font-weight:bold">[May…</div>
 <div class="t" style="left:501px;top:8px;color:#d8d8d8">[May…</div>
 <div class="t" style="left:578px;top:8px;color:#d8d8d8">P an…</div>
 <div class="t" style="left:655px;top:8px;color:#d8d8d8">Creat…</div>
 <div class="t" style="left:733px;top:8px;color:#d8d8d8">Mee…</div>
 <div class="t" style="left:810px;top:8px;color:#d8d8d8">*Unti…</div>
 <div class="t" style="left:887px;top:8px;color:#fff">Free…</div>
 <div class="t" style="left:1150px;top:8px;color:#4a9ae0;font-weight:bold">EN</div>
 <div class="t" style="left:1258px;top:8px;color:#d8d8d8">Sat Feb 24, 18:15</div>
</div>
</body></html>
